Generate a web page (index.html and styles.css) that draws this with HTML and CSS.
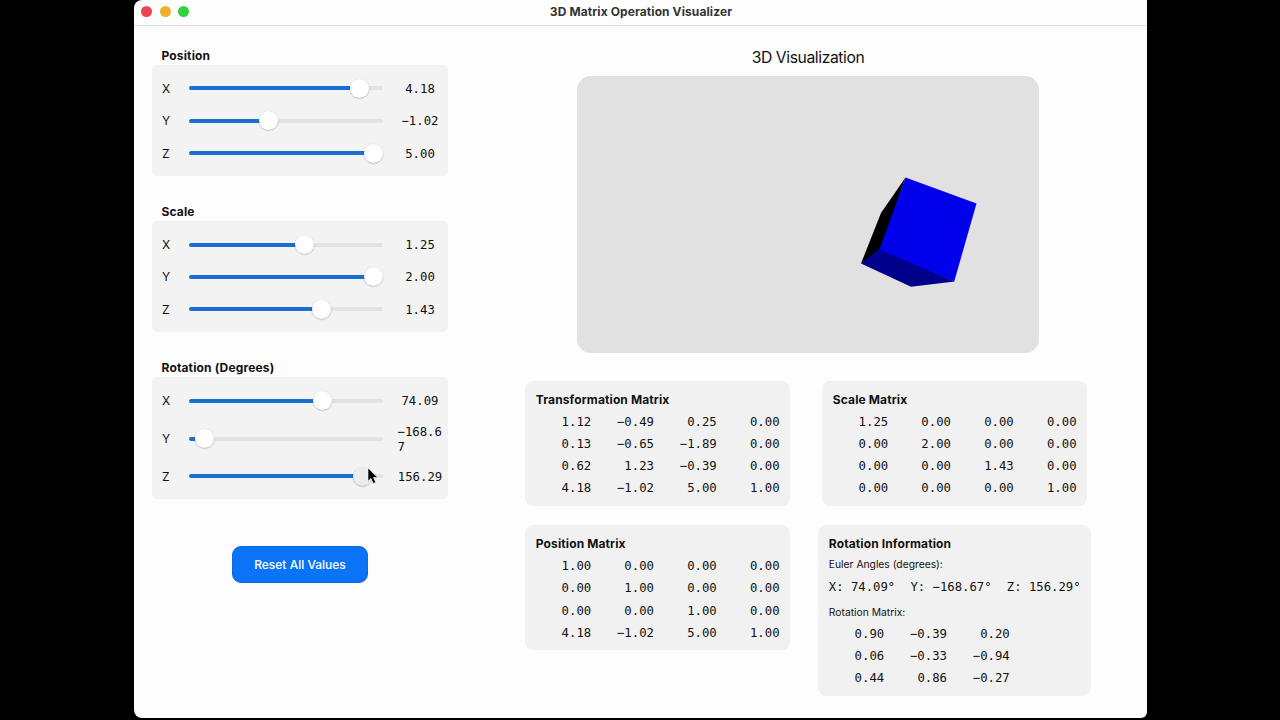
FILE: index.html
```html
<!DOCTYPE html>
<html lang="en">
<head>
<meta charset="UTF-8">
<meta name="viewport" content="width=device-width, initial-scale=1.0">
<title>3D Matrix Operation Visualizer</title>
<link rel="stylesheet" href="styles.css">
</head>
<body>
<div class="window">
<header class="titlebar">
<div class="lights"><i class="close"></i><i class="minimize"></i><i class="maximize"></i></div>
<h1>3D Matrix Operation Visualizer</h1>
</header>
<div class="content">
<aside class="controls">
<section class="group">
<h2>Position</h2>
<div class="box">
<div class="row"><label>X</label><div class="slider" style="--v: 0.918"><b></b></div><output>4.18</output></div>
<div class="row"><label>Y</label><div class="slider" style="--v: 0.398"><b></b></div><output>−1.02</output></div>
<div class="row"><label>Z</label><div class="slider" style="--v: 1"><b></b></div><output>5.00</output></div>
</div>
</section>
<section class="group">
<h2>Scale</h2>
<div class="box">
<div class="row"><label>X</label><div class="slider" style="--v: 0.605"><b></b></div><output>1.25</output></div>
<div class="row"><label>Y</label><div class="slider" style="--v: 1"><b></b></div><output>2.00</output></div>
<div class="row"><label>Z</label><div class="slider" style="--v: 0.7"><b></b></div><output>1.43</output></div>
</div>
</section>
<section class="group">
<h2>Rotation (Degrees)</h2>
<div class="box">
<div class="row"><label>X</label><div class="slider" style="--v: 0.706"><b></b></div><output>74.09</output></div>
<div class="row"><label>Y</label><div class="slider" style="--v: 0.0315"><b></b></div><output class="wrap">−168.67</output></div>
<div class="row"><label>Z</label><div class="slider active" style="--v: 0.934"><b></b></div><output>156.29</output></div>
</div>
</section>
<button class="reset">Reset All Values</button>
</aside>
<main class="display">
<h2 class="viewtitle">3D Visualization</h2>
<svg class="view" viewBox="577 76 462 277">
<polygon fill="#000" points="905.5,177.5 881,213 861,263.5 880,252"/>
<polygon fill="#00008b" points="861,263.5 880,248 954.5,281.5 911,286.8"/>
<polygon fill="#0000eb" points="905.5,177.5 976.5,203.5 954.2,281.5 879.5,249.5"/>
</svg>
<div class="cards">
<section class="card">
<h3>Transformation Matrix</h3>
<div class="matrix">
<span>1.12</span><span>−0.49</span><span>0.25</span><span>0.00</span>
<span>0.13</span><span>−0.65</span><span>−1.89</span><span>0.00</span>
<span>0.62</span><span>1.23</span><span>−0.39</span><span>0.00</span>
<span>4.18</span><span>−1.02</span><span>5.00</span><span>1.00</span>
</div>
</section>
<section class="card">
<h3>Scale Matrix</h3>
<div class="matrix">
<span>1.25</span><span>0.00</span><span>0.00</span><span>0.00</span>
<span>0.00</span><span>2.00</span><span>0.00</span><span>0.00</span>
<span>0.00</span><span>0.00</span><span>1.43</span><span>0.00</span>
<span>0.00</span><span>0.00</span><span>0.00</span><span>1.00</span>
</div>
</section>
<section class="card">
<h3>Position Matrix</h3>
<div class="matrix">
<span>1.00</span><span>0.00</span><span>0.00</span><span>0.00</span>
<span>0.00</span><span>1.00</span><span>0.00</span><span>0.00</span>
<span>0.00</span><span>0.00</span><span>1.00</span><span>0.00</span>
<span>4.18</span><span>−1.02</span><span>5.00</span><span>1.00</span>
</div>
</section>
<section class="card info">
<h3>Rotation Information</h3>
<p class="caption">Euler Angles (degrees):</p>
<div class="euler"><span>X: 74.09°</span><span>Y: −168.67°</span><span>Z: 156.29°</span></div>
<p class="caption">Rotation Matrix:</p>
<div class="matrix three">
<span>0.90</span><span>−0.39</span><span>0.20</span>
<span>0.06</span><span>−0.33</span><span>−0.94</span>
<span>0.44</span><span>0.86</span><span>−0.27</span>
</div>
</section>
</div>
</main>
</div>
</div>
<svg class="cursor" viewBox="0 0 12 18"><path d="M1 1V14.2L4 11.4L6.2 16.4L8.7 15.3L6.5 10.5H10.7Z"/></svg>
</body>
</html>
```
FILE: styles.css
```css
:root {
	--sans: Inter, "Liberation Sans", sans-serif;
	--mono: "DejaVu Sans Mono", "Liberation Mono", monospace;
	--accent: #0a73f7;
	--knob: 19px;
}
* {
	box-sizing: border-box;
}
body {
	margin: 0;
	height: 720px;
	overflow: hidden;
	background: #000;
	color: #111;
	font: 12px/15px var(--sans);
}
h1, h2, h3, p {
	margin: 0;
}
.window {
	width: 1013px;
	height: 718px;
	margin-left: 134px;
	background: #fdfdfd;
	border-radius: 8px 0 6px 8px;
	overflow: hidden;
}
.titlebar {
	display: grid;
	grid-template-columns: 1fr auto 1fr;
	align-items: center;
	height: 26px;
	padding: 0 6px 2px 7px;
	border-bottom: 1px solid #e0e0e0;
}
.titlebar h1 {
	font-size: 12px;
	font-weight: 700;
	letter-spacing: 0.1px;
	color: #333;
}
.lights {
	display: flex;
	gap: 7.5px;
}
.lights i {
	width: 11px;
	height: 11px;
	border-radius: 50%;
}
.close {
	background: #ec4652;
}
.minimize {
	background: #f0b02e;
}
.maximize {
	background: #32d140;
}
.content {
	display: flex;
	align-items: flex-start;
}

.controls {
	display: flex;
	flex-direction: column;
	width: 296px;
	margin: 21.3px 0 0 18px;
}
.group {
	margin-bottom: 27.5px;
}
.group h2 {
	margin-left: 9.5px;
	height: 18px;
	font-size: 12px;
	line-height: 17px;
	font-weight: 700;
	letter-spacing: 0.15px;
}
.box {
	display: flex;
	flex-direction: column;
	gap: 13.4px;
	padding: 13.7px 4px 13.1px 10px;
	background: #f3f3f3;
	border-radius: 5px;
}
.row {
	display: flex;
	align-items: center;
	min-height: 19px;
}
.row label {
	width: 27px;
}
.slider {
	--pos: calc((100% - var(--knob)) * var(--v));
	position: relative;
	flex: none;
	width: 194.4px;
	height: 4px;
	border-radius: 2px;
	background: linear-gradient(#1a6fd0, #1a6fd0) 0 0 / calc(var(--pos) + 9px) 100% no-repeat #e2e2e2;
}
/*the knob rides on top of the track*/
.slider b {
	position: absolute;
	top: -7.5px;
	left: var(--pos);
	width: var(--knob);
	height: var(--knob);
	border-radius: 50%;
	background: #fff;
	box-shadow: 0 0.5px 1.5px rgba(0, 0, 0, 0.3);
}
.slider.active b {
	background: #ececef;
}
.row output {
	flex: none;
	width: 45px;
	margin-left: 14.1px;
	padding-top: 2px;
	font: 12.3px/15px var(--mono);
	text-align: center;
}
.row output.wrap {
	height: 30px;
	padding-top: 1px;
	text-align: left;
	word-break: break-all;
}
.reset {
	align-self: center;
	width: 136px;
	height: 37px;
	margin-top: 19.5px;
	border: 1px solid #1266d8;
	border-radius: 9px;
	background: var(--accent);
	color: #fff;
	font: 500 12px/15px var(--sans);
}

.display {
	display: flex;
	flex-direction: column;
	align-items: center;
	width: 572px;
	margin: 21px 0 0 74px;
}
.viewtitle {
	height: 29px;
	font-size: 15.7px;
	line-height: 21px;
	font-weight: 400;
	letter-spacing: -0.4px;
}
.view {
	width: 462px;
	height: 277px;
	background: #e1e1e1;
	border-radius: 14px;
}
.cards {
	display: grid;
	grid-template-columns: 265px 273px;
	gap: 19px 28px;
	justify-items: center;
	align-items: start;
	margin: 28px 0 0 0.4px;
}
.card {
	padding: 11px 10.4px 6.6px;
	background: #f1f1f1;
	border-radius: 8px;
}
.card h3 {
	font-size: 12px;
	line-height: 15px;
	font-weight: 700;
	letter-spacing: 0.12px;
}
.matrix {
	display: grid;
	grid-template-columns: repeat(4, 55.4px);
	column-gap: 7.4px;
	margin-top: 4.2px;
	font: 12.3px/22.1px var(--mono);
	text-align: right;
}
.matrix.three {
	grid-template-columns: repeat(3, 55.4px);
}
.info {
	width: 272.5px;
	padding-bottom: 7.2px;
}
.caption {
	margin-top: 7.3px;
	font-size: 10.3px;
	line-height: 13px;
}
.euler {
	display: flex;
	justify-content: space-between;
	margin: 7.2px 0 11px;
	font: 12.25px/16px var(--mono);
	white-space: nowrap;
}

.cursor {
	position: absolute;
	left: 367px;
	top: 467px;
	width: 12px;
	height: 18px;
	fill: #000;
	stroke: #fff;
	stroke-width: 0.6;
}
```
